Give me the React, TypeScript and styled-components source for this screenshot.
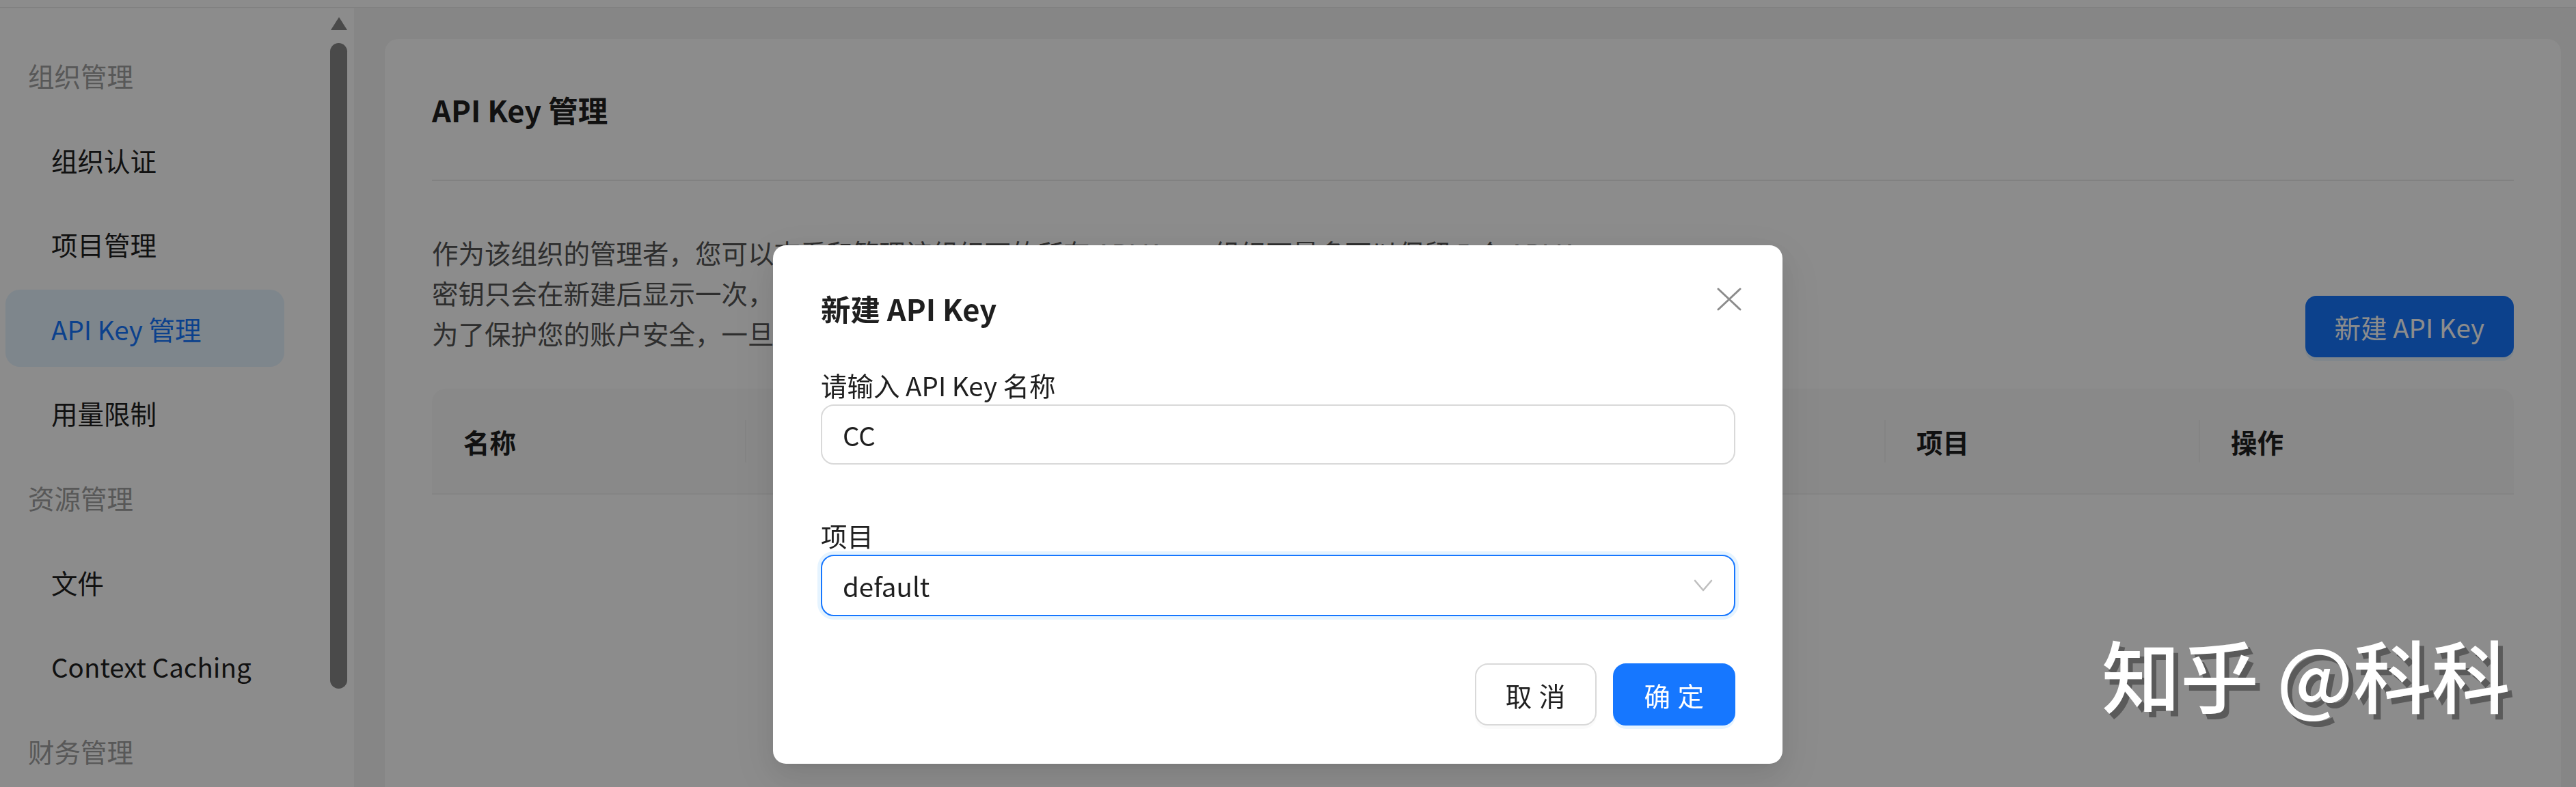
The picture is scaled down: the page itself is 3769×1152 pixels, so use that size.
import React from "react";
import styled, { createGlobalStyle, css } from "styled-components";

const FONT = `"Noto Sans CJK SC", "Noto Sans", sans-serif`;

const GlobalStyle = createGlobalStyle`
  html, body {
    margin: 0;
    padding: 0;
    overflow: hidden;
    background: #f5f5f5;
    font-family: ${FONT};
  }
  * {
    box-sizing: border-box;
  }
`;

// 페이지 전체
const Page = styled.div`
  position: relative;
  width: 100vw;
  height: 100vh;
  display: flex;
  flex-direction: column;
  overflow: hidden;
`;

const TopBar = styled.header`
  height: 12px;
  flex-shrink: 0;
  background: #ffffff;
  border-bottom: 2px solid #ebebeb;
`;

const Body = styled.div`
  flex: 1;
  display: flex;
  min-height: 0;
`;

// 사이드바
const Sidebar = styled.aside`
  width: 518px;
  flex-shrink: 0;
  display: flex;
  background: #ffffff;
`;

const MenuList = styled.nav`
  flex: 1;
  display: flex;
  flex-direction: column;
  gap: 10.6px;
  padding: 41.5px 0 0 8px;
  overflow: hidden;
`;

const MenuGroup = styled.div`
  height: 113px;
  flex-shrink: 0;
  display: flex;
  align-items: center;
  padding-left: 33px;
  font-size: 38.5px;
  color: #a0a0a0;
`;

const MenuItem = styled.a<{ $active?: boolean }>`
  height: 113px;
  width: 408px;
  flex-shrink: 0;
  display: flex;
  align-items: center;
  padding-left: 67px;
  border-radius: 21px;
  font-size: 38.5px;
  color: #1f1f1f;
  text-decoration: none;

  ${({ $active }) =>
    $active &&
    css`
      background: #e6f4ff;
      color: #1677ff;
    `}
`;

const ScrollTrack = styled.div`
  width: 43px;
  flex-shrink: 0;
  display: flex;
  flex-direction: column;
  align-items: center;
  gap: 19px;
  padding: 13px 10px 0 8px;
`;

const ScrollArrow = styled.div`
  width: 0;
  height: 0;
  border-left: 12.5px solid transparent;
  border-right: 12.5px solid transparent;
  border-bottom: 19px solid #878787;
`;

const ScrollThumb = styled.div`
  width: 25px;
  height: 945px;
  border-radius: 13px;
  background: #878787;
`;

// 본문
const Content = styled.main`
  flex: 1;
  display: flex;
  flex-direction: column;
  padding: 45px 22px 0 45px;
  background: #f5f5f5;
`;

const Card = styled.section`
  flex: 1;
  background: #ffffff;
  border-radius: 20px 20px 0 0;
  padding: 71px 69px 0;
`;

const PageTitle = styled.h1`
  margin: 0;
  font-size: 43.5px;
  line-height: 65px;
  font-weight: 700;
  color: #1f1f1f;
`;

const Divider = styled.hr`
  margin: 70px 0 0;
  border: none;
  height: 2px;
  background: #ebebeb;
`;

const IntroRow = styled.div`
  display: flex;
  justify-content: space-between;
  align-items: flex-end;
  margin-top: 75px;
`;

const Intro = styled.div`
  font-size: 38.5px;
  line-height: 59px;
  color: #555555;
  padding-bottom: 6px;

  p {
    margin: 0;
  }
`;

const Button = styled.button<{ $primary?: boolean }>`
  height: 91px;
  padding: 0 43px;
  border-radius: 19px;
  font-family: ${FONT};
  font-size: 38.5px;
  letter-spacing: 1px;
  cursor: pointer;
  border: 2px solid #d9d9d9;
  background: #ffffff;
  color: #1f1f1f;
  box-shadow: 0 5px 0 rgba(0, 0, 0, 0.02);

  ${({ $primary }) =>
    $primary &&
    css`
      border-color: #1677ff;
      background: #1677ff;
      color: #ffffff;
      box-shadow: 0 5px 0 rgba(5, 145, 255, 0.1);
    `}
`;

const NewKeyButton = styled(Button)`
  height: 90px;
  padding: 0 41px;
  border-radius: 16px;
  letter-spacing: 0;
`;

const TableHead = styled.div`
  display: grid;
  grid-template-columns: 458px 556px 556px 555px 460px 1fr;
  height: 155px;
  margin-top: 46px;
  background: #fafafa;
  border-radius: 20px 20px 0 0;
  border-bottom: 2px solid #f0f0f0;
`;

const HeadCell = styled.div<{ $first?: boolean }>`
  display: flex;
  align-items: center;
  padding-left: ${({ $first }) => ($first ? 46 : 0)}px;
  font-size: 38.5px;
  font-weight: 700;
  color: #1f1f1f;
`;

const HeadSep = styled.span`
  width: 2px;
  height: 62px;
  margin-right: 45px;
  background: #f0f0f0;
`;

// 모달
const Mask = styled.div`
  position: fixed;
  inset: 0;
  background: rgba(0, 0, 0, 0.45);
`;

const ModalWrap = styled.div`
  position: fixed;
  inset: 0;
  padding: 359px 0 0 1131px;
`;

const Modal = styled.div`
  position: relative;
  width: 1477px;
  padding: 61px 69px 56px 70px;
  background: #ffffff;
  border-radius: 19px;
  box-shadow: 0 14px 38px 0 rgba(0, 0, 0, 0.08),
    0 7px 14px -10px rgba(0, 0, 0, 0.12), 0 22px 67px 19px rgba(0, 0, 0, 0.05);
`;

const ModalTitle = styled.h2`
  margin: 0;
  font-size: 43.5px;
  line-height: 64px;
  font-weight: 700;
  color: #1f1f1f;
`;

const CloseButton = styled.button`
  position: absolute;
  top: 47px;
  right: 46px;
  width: 64px;
  height: 64px;
  padding: 0;
  border: none;
  background: transparent;
  display: flex;
  align-items: center;
  justify-content: center;
  cursor: pointer;
`;

const FieldLabel = styled.label<{ $gap: number }>`
  display: block;
  margin-top: ${({ $gap }) => $gap}px;
  margin-bottom: 2px;
  font-size: 38.5px;
  line-height: 54px;
  color: #1f1f1f;
`;

const TextInput = styled.input`
  display: block;
  width: 100%;
  height: 88px;
  padding: 0 30px;
  border: 2px solid #d9d9d9;
  border-radius: 19px;
  font-family: ${FONT};
  font-size: 38.5px;
  color: #1f1f1f;
  outline: none;
`;

const SelectBox = styled.div`
  height: 90px;
  display: flex;
  align-items: center;
  justify-content: space-between;
  padding: 0 31px 0 30px;
  border: 2.4px solid #1677ff;
  border-radius: 19px;
  box-shadow: 0 0 0 5px rgba(5, 145, 255, 0.1);
  font-size: 38.5px;
  color: #1f1f1f;
`;

const ModalFooter = styled.div`
  display: flex;
  justify-content: flex-end;
  gap: 24px;
  margin-top: 69px;
`;

const Watermark = styled.div`
  position: absolute;
  left: 3075px;
  top: 928px;
  font-size: 115px;
  line-height: 1;
  font-weight: 500;
  color: #ffffff;
  text-shadow: 7px 8px 0 #5a5a5a;
  white-space: nowrap;
  pointer-events: none;
`;

type MenuEntry = { label: string; group?: boolean; active?: boolean };

const menu: MenuEntry[] = [
  { label: "组织管理", group: true },
  { label: "组织认证" },
  { label: "项目管理" },
  { label: "API Key 管理", active: true },
  { label: "用量限制" },
  { label: "资源管理", group: true },
  { label: "文件" },
  { label: "Context Caching" },
  { label: "财务管理", group: true },
];

const columns = ["名称", "Key", "创建时间", "最近使用时间", "项目", "操作"];

function CloseIcon() {
  return (
    <svg width="36" height="34" viewBox="0 0 36 34" fill="none">
      <path
        d="M2 2L34 32M34 2L2 32"
        stroke="#8c8c8c"
        strokeWidth="3"
        strokeLinecap="round"
      />
    </svg>
  );
}

function ChevronDown() {
  return (
    <svg width="28" height="18" viewBox="0 0 28 18" fill="none">
      <path
        d="M2 2L14 16L26 2"
        stroke="#bfbfbf"
        strokeWidth="2.6"
        strokeLinecap="round"
        strokeLinejoin="round"
      />
    </svg>
  );
}

function CreateKeyModal() {
  return (
    <ModalWrap>
      <Modal>
        <CloseButton aria-label="关闭">
          <CloseIcon />
        </CloseButton>
        <ModalTitle>新建 API Key</ModalTitle>
        <FieldLabel $gap={52}>请输入 API Key 名称</FieldLabel>
        <TextInput defaultValue="CC" readOnly />
        <FieldLabel $gap={76}>项目</FieldLabel>
        <SelectBox>
          <span>default</span>
          <ChevronDown />
        </SelectBox>
        <ModalFooter>
          <Button>取 消</Button>
          <Button $primary>确 定</Button>
        </ModalFooter>
      </Modal>
    </ModalWrap>
  );
}

export default function App() {
  return (
    <Page>
      <GlobalStyle />
      <TopBar />
      <Body>
        <Sidebar>
          <MenuList>
            {menu.map((m) =>
              m.group ? (
                <MenuGroup key={m.label}>{m.label}</MenuGroup>
              ) : (
                <MenuItem key={m.label} $active={m.active}>
                  {m.label}
                </MenuItem>
              )
            )}
          </MenuList>
          <ScrollTrack>
            <ScrollArrow />
            <ScrollThumb />
          </ScrollTrack>
        </Sidebar>

        <Content>
          <Card>
            <PageTitle>API Key 管理</PageTitle>
            <Divider />
            <IntroRow>
              <Intro>
                <p>
                  作为该组织的管理者，您可以查看和管理该组织下的所有 API
                  Key，组织下最多可以保留 5 个 API Key。
                </p>
                <p>密钥只会在新建后显示一次，请妥善保存。</p>
                <p>为了保护您的账户安全，一旦发现泄露请及时删除。</p>
              </Intro>
              <NewKeyButton $primary>新建 API Key</NewKeyButton>
            </IntroRow>
            <TableHead>
              {columns.map((c, i) => (
                <HeadCell key={c} $first={i === 0}>
                  {i > 0 && <HeadSep />}
                  {c}
                </HeadCell>
              ))}
            </TableHead>
          </Card>
        </Content>
      </Body>

      <Mask />
      <CreateKeyModal />
      <Watermark>知乎 @科科</Watermark>
    </Page>
  );
}
